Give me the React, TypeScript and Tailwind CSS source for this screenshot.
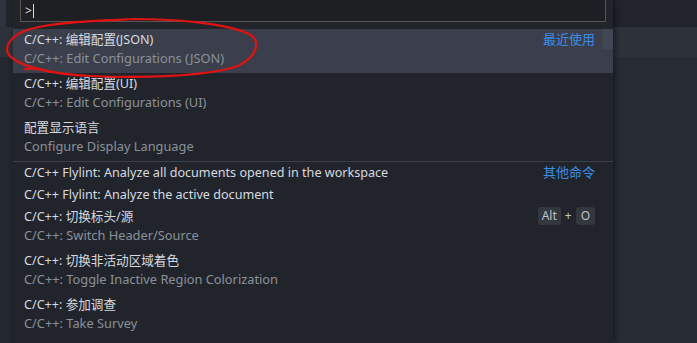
import React from "react"

type Item = {
  title: string
  detail?: string
  label?: string
  keys?: string[]
  active?: boolean
  separator?: boolean
}

const items: Item[] = [
  { title: "C/C++: 编辑配置(JSON)", detail: "C/C++: Edit Configurations (JSON)", label: "最近使用", active: true },
  { title: "C/C++: 编辑配置(UI)", detail: "C/C++: Edit Configurations (UI)" },
  { title: "配置显示语言", detail: "Configure Display Language" },
  { title: "C/C++ Flylint: Analyze all documents opened in the workspace", label: "其他命令", separator: true },
  { title: "C/C++ Flylint: Analyze the active document" },
  { title: "C/C++: 切换标头/源", detail: "C/C++: Switch Header/Source", keys: ["Alt", "O"] },
  { title: "C/C++: 切换非活动区域着色", detail: "C/C++: Toggle Inactive Region Colorization" },
  { title: "C/C++: 参加调查", detail: "C/C++: Take Survey" },
]

const font = { fontFamily: '"Noto Sans", "Noto Sans CJK SC", sans-serif' }

function Row({ item }: { item: Item }) {
  return (
    <div
      className={`flex items-start justify-between pl-[11px] pr-[18px] ${item.detail ? "h-[44px]" : "h-[22px]"} ${item.active ? "bg-[#3a3f4b]" : ""}`}
    >
      <div className="flex flex-col">
        <div className="h-[21px] leading-[21px] text-[12.6px] text-[#d7dae0] whitespace-nowrap">{item.title}</div>
        {item.detail && (
          <div className="h-[16px] leading-[16px] text-[12.8px] text-[#8b919c] whitespace-nowrap">{item.detail}</div>
        )}
      </div>
      {item.label && <div className="h-[21px] leading-[21px] text-[13px] text-[#3a8ee6]">{item.label}</div>}
      {item.keys && (
        <div className="flex items-center gap-[4px] pt-[1px] text-[12px] text-[#bfc2c8]">
          <span className="h-[18px] leading-[18px] px-[4px] rounded-[3px] bg-[#33373e]">{item.keys[0]}</span>
          <span>+</span>
          <span className="h-[18px] leading-[18px] px-[5px] rounded-[3px] bg-[#33373e]">{item.keys[1]}</span>
        </div>
      )}
    </div>
  )
}

export default function App() {
  return (
    <div className="relative w-[697px] h-[343px] overflow-hidden bg-[#282c34] flex" style={font}>
      {/* left sidebar edge */}
      <div className="w-[13px] flex flex-col">
        <div className="h-[27px] flex">
          <div className="w-[6px] bg-[#2f333d]" />
          <div className="flex-1 bg-[#21252b]" />
        </div>
        <div className="h-[30px] bg-[#2c313a]" />
        <div className="flex-1 bg-[#23272e]" />
      </div>

      {/* quick input panel */}
      <div className="relative z-10 w-[600px] h-full bg-[#21252b] shadow-[2px_0_6px_rgba(0,0,0,0.45)]">
        <div className="px-[7px]">
          <div className="h-[23px] -mt-[1px] bg-[#1e1f23] border border-[#58554f] flex items-center pl-[4px] text-[12px] text-[#d7dae0]">
            <span>&gt;</span>
            <span className="ml-[1px] w-px h-[14px] bg-[#d7dae0]" />
          </div>
        </div>
        <div className="mt-[7px] relative">
          {items.map((it, i) => (
            <div key={i}>
              {it.separator && <div className="h-px bg-[#3b3f47]" />}
              <Row item={it} />
            </div>
          ))}
          <div className="absolute right-0 top-0 w-[10px] h-[20px] bg-[#424754]" />
        </div>
      </div>

      {/* editor on the right */}
      <div className="flex-1 flex flex-col">
        <div className="h-[27px] bg-[#21252b]" />
        <div className="h-[30px] bg-[#2c313a]" />
        <div className="flex-1 bg-[#282c34]" />
      </div>

      {/* red annotation */}
      <svg className="absolute left-0 top-0 z-20 pointer-events-none" width="697" height="343">
        <path
          d="M 22 32 C 45 22, 90 21, 135 19 C 180 19, 225 24, 247 33 C 262 40, 258 56, 238 66 C 205 77, 140 78, 90 76 C 50 74, 18 66, 9 55 C 3 46, 12 37, 22 32 C 32 27, 55 24, 80 22"
          fill="none"
          stroke="#e11212"
          strokeWidth="2.2"
          strokeLinecap="round"
        />
        <path d="M 25 69 C 33 68, 42 69, 50 72" fill="none" stroke="#e11212" strokeWidth="2.2" strokeLinecap="round" />
      </svg>
    </div>
  )
}
